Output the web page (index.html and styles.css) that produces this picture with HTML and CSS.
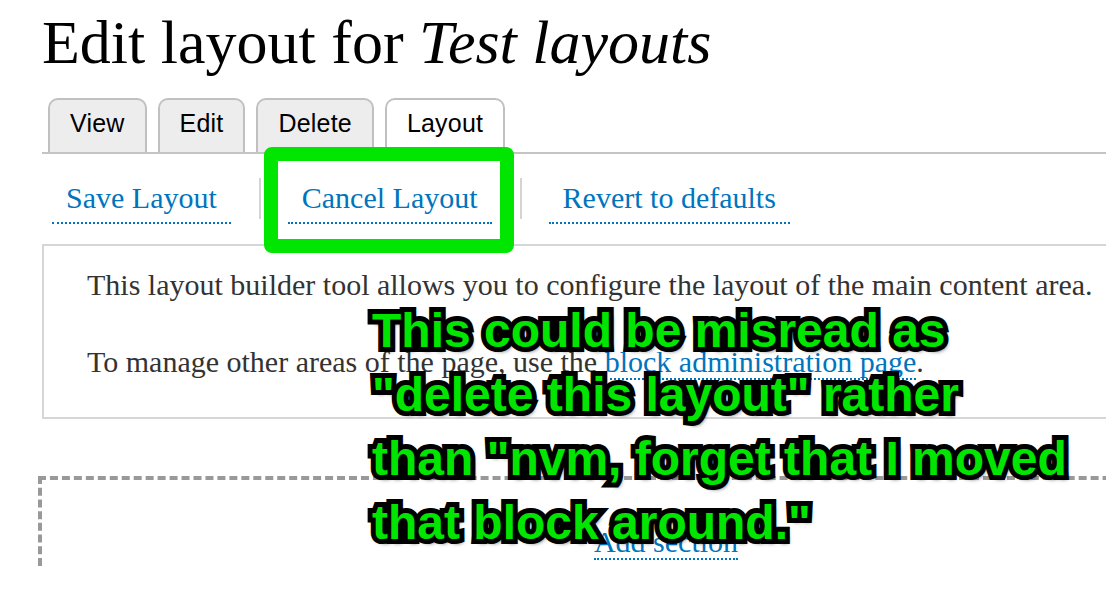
FILE: index.html
```html
<!DOCTYPE html>
<html lang="en">
<head>
    <meta charset="UTF-8">
    <title>Edit layout for Test layouts</title>
    <link rel="stylesheet" href="styles.css">
</head>
<body>
    <div class="page">
        <h1>Edit layout for <em>Test layouts</em></h1>

        <!-- Primary tabs -->
        <ul class="tabs">
            <li class="tab"><a href="#">View</a></li>
            <li class="tab"><a href="#">Edit</a></li>
            <li class="tab"><a href="#">Delete</a></li>
            <li class="tab active"><a href="#">Layout</a></li>
        </ul>

        <!-- Layout actions -->
        <ul class="actions">
            <li><a href="#">Save Layout</a></li>
            <li><a href="#">Cancel Layout</a></li>
            <li><a href="#">Revert to defaults</a></li>
        </ul>

        <div class="message">
            <p>This layout builder tool allows you to configure the layout of the main content area.</p>
            <p>To manage other areas of the page, use the <a href="#">block administration page</a>.</p>
        </div>

        <div class="section-box">
            <a href="#" class="add-section">Add section</a>
        </div>
    </div>

    <!-- Annotation drawn over the screenshot -->
    <div class="highlight"></div>
    <p class="note">This could be misread as<br>"delete this layout" rather<br>than "nvm, forget that I moved<br>that block around."</p>
</body>
</html>
```

FILE: styles.css
```css
* {
    margin: 0;
    padding: 0;
    box-sizing: border-box;
}

html, body {
    width: 1106px;
    height: 608px;
    overflow: hidden;
}

body {
    font-family: 'Liberation Serif', 'Times New Roman', serif;
    background-color: #fff;
    color: #333;
    position: relative;
}

a {
    color: #0074bd;
    text-decoration: none;
}

.page {
    width: 1300px;
    padding-left: 42px;
}

h1 {
    padding-top: 7px;
    font-size: 62px;
    font-weight: normal;
    line-height: 70px;
    color: #000;
}

h1 em {
    font-style: italic;
}

/* Tabs */
.tabs {
    list-style: none;
    display: flex;
    gap: 11px;
    margin-top: 21px;
    padding-left: 6px;
    border-bottom: 2px solid #c4c4c4;
}

.tab {
    height: 54px;
    padding: 8px 20px 0;
    background-color: #ededed;
    border: 2px solid #c0c0c0;
    border-bottom: none;
    border-radius: 10px 10px 0 0;
}

.tab a {
    font-family: 'Liberation Sans', Arial, sans-serif;
    font-size: 25px;
    line-height: 30px;
    letter-spacing: 0.2px;
    color: #000;
}

.tab.active {
    background-color: #fff;
}

/* Action links */
.actions {
    list-style: none;
    display: flex;
    height: 90px;
    padding: 24px 0 0 10px;
}

.actions li {
    height: 41px;
    padding: 2px 28px 0 27px;
}

.actions li:first-child {
    padding-left: 0;
}

.actions li + li {
    border-left: 2px solid #d4d4d4;
}

.actions a {
    display: block;
    padding: 0 14px 6px;
    font-size: 30px;
    line-height: 36px;
    border-bottom: 2px dotted #0074bd;
}

/* Info message */
.message {
    height: 175px;
    border: 2px solid #d3d7da;
    padding: 22px 0 0 43px;
    font-size: 30px;
    line-height: 34px;
    white-space: nowrap;
}

.message p + p {
    margin-top: 43px;
}

.message a {
    border-bottom: 2px dotted #0074bd;
}

/* Layout builder section */
.section-box {
    width: 1252px;
    height: 90px;
    margin: 57px 0 0 -4px;
    border: 4px dashed #999;
    border-bottom: none;
    border-right: none;
    padding-top: 45px;
    text-align: center;
}

.add-section {
    font-size: 30px;
    line-height: 34px;
    border-bottom: 2px dotted #0074bd;
}

/* Annotation */
.highlight {
    position: absolute;
    left: 264px;
    top: 147px;
    width: 250px;
    height: 106px;
    border: 14px solid #00e600;
    border-radius: 8px;
}

.note {
    position: absolute;
    left: 372px;
    top: 299px;
    font-family: 'Liberation Sans', Arial, sans-serif;
    font-weight: bold;
    font-size: 48px;
    line-height: 64px;
    white-space: nowrap;
    color: #00e600;
    -webkit-text-stroke: 10px #000;
    paint-order: stroke fill;
    text-shadow: 3px 4px 4px rgba(0, 0, 0, 0.7);
}
```
